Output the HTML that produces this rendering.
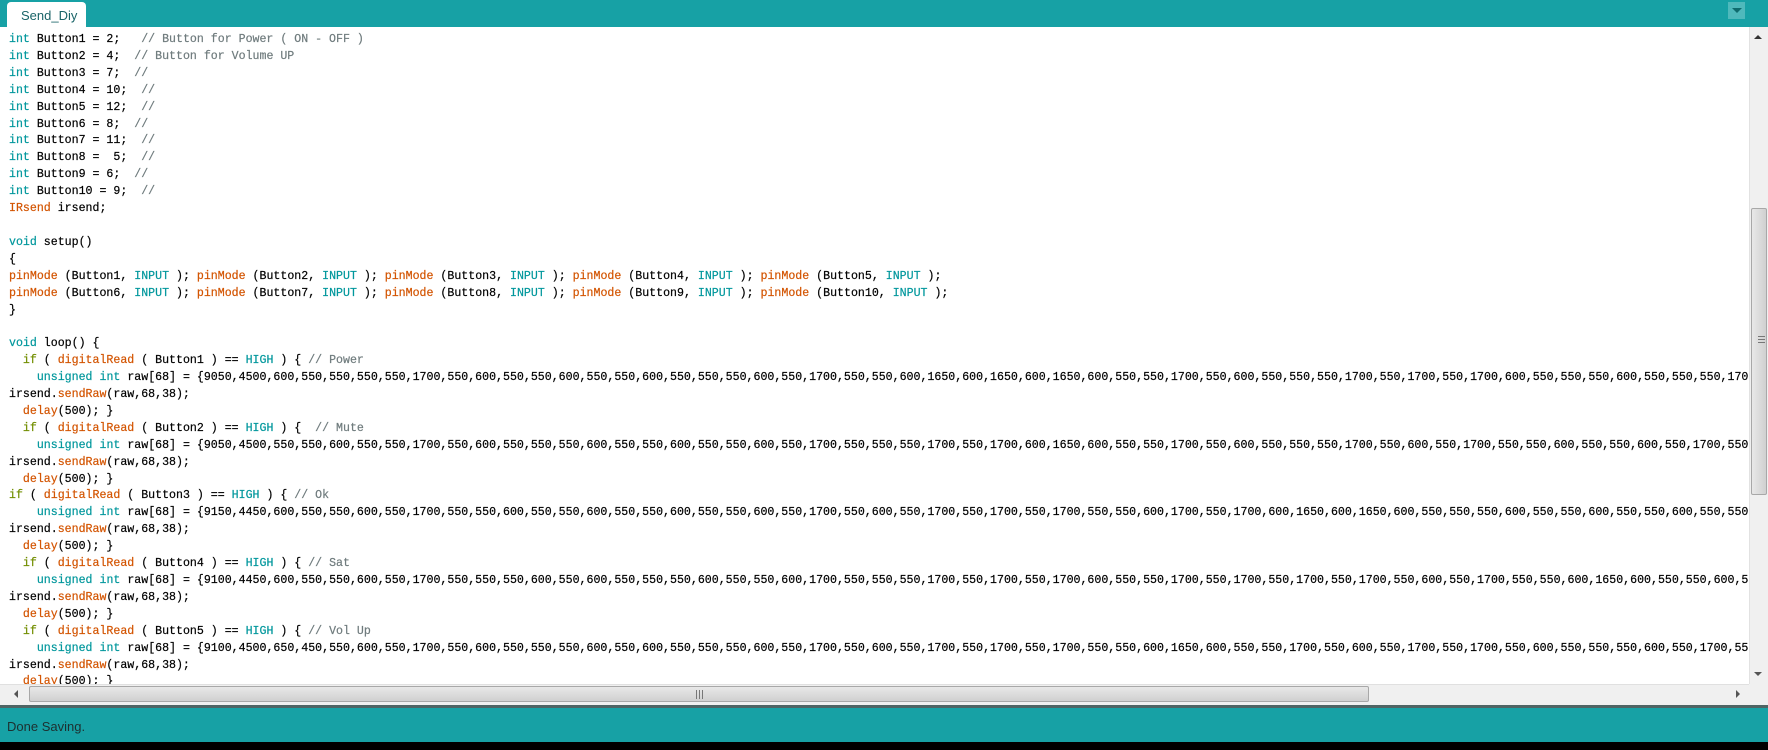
<!DOCTYPE html>
<html><head><meta charset="utf-8"><style>
*{margin:0;padding:0;box-sizing:border-box}
body{width:1768px;height:750px;overflow:hidden;background:#000;position:relative;font-family:"Liberation Sans",sans-serif}
#hdr{position:absolute;left:0;top:0;width:1768px;height:27px;background:#17a1a5}
#tab{position:absolute;left:7px;top:2px;width:79px;height:25px;background:#fff;border-radius:4px 4px 0 0;color:#1a6468;font-size:13px;padding:6px 0 0 14px}
#dd{position:absolute;left:1728px;top:2px;width:17px;height:17px;background:#4fb9bc}
#dd:after{content:"";position:absolute;left:4px;top:6px;border-left:5px solid transparent;border-right:5px solid transparent;border-top:5px solid #0f6b6e}
#ed{position:absolute;left:0;top:27px;width:1749px;height:657px;background:#fff;overflow:hidden}
pre{position:absolute;left:9px;top:5px;font-family:"Liberation Mono",monospace;font-size:11.6px;line-height:16.9px;color:#000;white-space:pre;-webkit-text-stroke:0.2px #000}
.k{color:#00979c;-webkit-text-stroke:0.2px #00979c}.f{color:#d35400;-webkit-text-stroke:0.2px #d35400}.c{color:#6f7b7d;-webkit-text-stroke:0.2px #6f7b7d}.i{color:#728e00;-webkit-text-stroke:0.2px #728e00}
#vs{position:absolute;left:1749px;top:27px;width:19px;height:657px;background:#f0f0f0;border-left:1px solid #e2e2e2}
#vt{position:absolute;left:1751px;top:208px;width:16px;height:287px;background:linear-gradient(90deg,#e8e8e8,#d0d0d0);border:1px solid #a8a8a8;border-radius:2px}
#hs{position:absolute;left:0;top:684px;width:1768px;height:21px;background:#f0f0f0;border-top:1px solid #e0e0e0}
#ht{position:absolute;left:29px;top:686px;width:1340px;height:16px;background:linear-gradient(#e8e8e8,#d0d0d0);border:1px solid #a8a8a8;border-radius:2px}
#st{position:absolute;left:0;top:705px;width:1768px;height:37px;background:#17a1a5;border-top:3px solid #4f6464;color:#1d3030;font-size:13px;padding:11px 0 0 7px}
.ar{position:absolute;width:0;height:0}
</style></head><body>
<div id="hdr"><div id="tab">Send_Diy</div><div id="dd"></div></div>
<div id="ed"><pre><span class="k">int</span> Button1 = 2;   <span class="c">// Button for Power ( ON - OFF )</span>
<span class="k">int</span> Button2 = 4;  <span class="c">// Button for Volume UP</span>
<span class="k">int</span> Button3 = 7;  <span class="c">//</span>
<span class="k">int</span> Button4 = 10;  <span class="c">//</span>
<span class="k">int</span> Button5 = 12;  <span class="c">//</span>
<span class="k">int</span> Button6 = 8;  <span class="c">//</span>
<span class="k">int</span> Button7 = 11;  <span class="c">//</span>
<span class="k">int</span> Button8 =  5;  <span class="c">//</span>
<span class="k">int</span> Button9 = 6;  <span class="c">//</span>
<span class="k">int</span> Button10 = 9;  <span class="c">//</span>
<span class="f">IRsend</span> irsend;

<span class="k">void</span> setup()
{
<span class="f">pinMode</span> (Button1, <span class="k">INPUT</span> ); <span class="f">pinMode</span> (Button2, <span class="k">INPUT</span> ); <span class="f">pinMode</span> (Button3, <span class="k">INPUT</span> ); <span class="f">pinMode</span> (Button4, <span class="k">INPUT</span> ); <span class="f">pinMode</span> (Button5, <span class="k">INPUT</span> );
<span class="f">pinMode</span> (Button6, <span class="k">INPUT</span> ); <span class="f">pinMode</span> (Button7, <span class="k">INPUT</span> ); <span class="f">pinMode</span> (Button8, <span class="k">INPUT</span> ); <span class="f">pinMode</span> (Button9, <span class="k">INPUT</span> ); <span class="f">pinMode</span> (Button10, <span class="k">INPUT</span> );
}

<span class="k">void</span> loop() {
  <span class="i">if</span> ( <span class="f">digitalRead</span> ( Button1 ) == <span class="k">HIGH</span> ) { <span class="c">// Power</span>
    <span class="k">unsigned</span> <span class="k">int</span> raw[68] = {9050,4500,600,550,550,550,550,1700,550,600,550,550,600,550,550,600,550,550,550,600,550,1700,550,550,600,1650,600,1650,600,1650,600,550,550,1700,550,600,550,550,550,1700,550,1700,550,1700,600,550,550,550,600,550,550,550,1700,550,600,550,1700,550,550,600,1650,600,550,550,600,550,1700,550};
<span>irsend.</span><span class="f">sendRaw</span>(raw,68,38);
  <span class="f">delay</span>(500); }
  <span class="i">if</span> ( <span class="f">digitalRead</span> ( Button2 ) == <span class="k">HIGH</span> ) {  <span class="c">// Mute</span>
    <span class="k">unsigned</span> <span class="k">int</span> raw[68] = {9050,4500,550,550,600,550,550,1700,550,600,550,550,550,600,550,550,600,550,550,600,550,1700,550,550,550,1700,550,1700,600,1650,600,550,550,1700,550,600,550,550,550,1700,550,600,550,1700,550,550,600,550,550,600,550,1700,550,1700,550,600,550,550,550,600,550,1700,550,1700,550,600,550,550};
<span>irsend.</span><span class="f">sendRaw</span>(raw,68,38);
  <span class="f">delay</span>(500); }
<span class="i">if</span> ( <span class="f">digitalRead</span> ( Button3 ) == <span class="k">HIGH</span> ) { <span class="c">// Ok</span>
    <span class="k">unsigned</span> <span class="k">int</span> raw[68] = {9150,4450,600,550,550,600,550,1700,550,550,600,550,550,600,550,550,600,550,550,600,550,1700,550,600,550,1700,550,1700,550,1700,550,550,600,1700,550,1700,600,1650,600,1650,600,550,550,550,600,550,550,600,550,550,600,550,550,1700,550,600,550,1700,550,550,600,1650,600,550,550,600,550};
<span>irsend.</span><span class="f">sendRaw</span>(raw,68,38);
  <span class="f">delay</span>(500); }
  <span class="i">if</span> ( <span class="f">digitalRead</span> ( Button4 ) == <span class="k">HIGH</span> ) { <span class="c">// Sat</span>
    <span class="k">unsigned</span> <span class="k">int</span> raw[68] = {9100,4450,600,550,550,600,550,1700,550,550,550,600,550,600,550,550,550,600,550,550,600,1700,550,550,550,1700,550,1700,550,1700,600,550,550,1700,550,1700,550,1700,550,1700,550,600,550,1700,550,550,600,1650,600,550,550,600,550,550,600,550,1700,550,1700,550,600,550,550,600,550,1700,550,550};
<span>irsend.</span><span class="f">sendRaw</span>(raw,68,38);
  <span class="f">delay</span>(500); }
  <span class="i">if</span> ( <span class="f">digitalRead</span> ( Button5 ) == <span class="k">HIGH</span> ) { <span class="c">// Vol Up</span>
    <span class="k">unsigned</span> <span class="k">int</span> raw[68] = {9100,4500,650,450,550,600,550,1700,550,600,550,550,550,600,550,600,550,550,550,600,550,1700,550,600,550,1700,550,1700,550,1700,550,550,600,1650,600,550,550,1700,550,600,550,1700,550,1700,550,600,550,550,550,600,550,1700,550,600,550,550,600,550,1700,550,550,600,550,1700,550,550,600,550};
<span>irsend.</span><span class="f">sendRaw</span>(raw,68,38);
  <span class="f">delay</span>(500); }</pre></div>
<div id="vs"></div><div id="vt"></div>
<div class="ar" style="left:1754px;top:35px;border-left:4px solid transparent;border-right:4px solid transparent;border-bottom:4px solid #333"></div>
<div class="ar" style="left:1754px;top:672px;border-left:4px solid transparent;border-right:4px solid transparent;border-top:4px solid #555"></div>
<div id="hs"></div><div id="ht"></div>
<div class="ar" style="left:14px;top:690px;border-top:4px solid transparent;border-bottom:4px solid transparent;border-right:4px solid #555"></div>
<div class="ar" style="left:1736px;top:690px;border-top:4px solid transparent;border-bottom:4px solid transparent;border-left:4px solid #555"></div>
<div style="position:absolute;left:1749px;top:684px;width:19px;height:21px;background:#f0f0f0"></div>
<div style="position:absolute;left:1758px;top:336px;width:7px;height:7px;border-top:1px solid #777;border-bottom:1px solid #777"><div style="margin-top:2px;border-top:1px solid #777"></div></div>
<div style="position:absolute;left:696px;top:690px;width:7px;height:9px;border-left:1px solid #777;border-right:1px solid #777"><div style="margin-left:2px;width:1px;height:9px;background:#777"></div></div>
<div id="st">Done Saving.</div>
</body></html>
